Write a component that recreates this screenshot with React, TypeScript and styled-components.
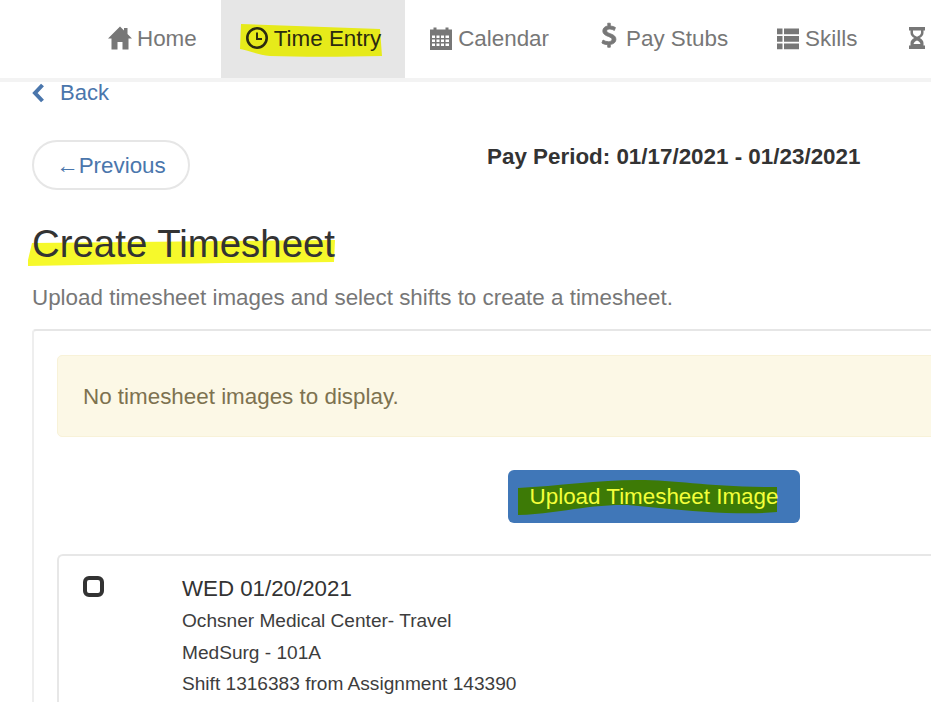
import { FC, ReactNode } from 'react';
import styled, { createGlobalStyle } from 'styled-components';

const GlobalStyle = createGlobalStyle`
  html, body { margin: 0; padding: 0; background: #fff; }
  body { font-family: "Liberation Sans", Arial, sans-serif; }
`;

const Page = styled.div`
  width: 931px;
  height: 702px;
  overflow: hidden;
  background: #fff;
`;

const Nav = styled.nav`
  display: flex;
  height: 78px;
  padding-left: 84px;
  border-bottom: 4px solid #f3f3f3;
  overflow: hidden;
`;

const NavItem = styled.div<{ $active?: boolean }>`
  position: relative;
  flex: none;
  display: flex;
  align-items: center;
  gap: 5px;
  padding: 0 24px;
  font-size: 22.4px;
  color: ${p => (p.$active ? '#2b2b10' : '#777')};
  background: ${p => (p.$active ? '#e6e6e6' : 'transparent')};
`;

const NavIcon = styled.svg`
  flex: none;
  width: 24px;
  height: 24px;
  margin-top: -2px;
  fill: currentColor;
  overflow: visible;
  position: relative;
`;

const NavLabel = styled.span`
  position: relative;
`;

const Marker = styled.svg`
  position: absolute;
  overflow: visible;
  pointer-events: none;
`;

const NavMarker = styled(Marker)`
  left: 19px;
  top: 24px;
  width: 142px;
  height: 34px;
`;

const Main = styled.main`
  padding-left: 32px;
`;

const BackLink = styled.a`
  display: flex;
  align-items: center;
  gap: 15px;
  height: 22px;
  font-size: 22px;
  color: #4a76ac;
`;

const TopRow = styled.div`
  display: flex;
  align-items: flex-start;
  margin-top: 36px;
`;

const PrevButton = styled.button`
  width: 158px;
  height: 50px;
  padding: 2px 0 0;
  border: 2px solid #e6e6e6;
  border-radius: 25px;
  background: #fff;
  font: 22.4px "Liberation Sans", Arial, sans-serif;
  color: #4a76ac;
`;

const PayPeriod = styled.div`
  margin: 4px 0 0 297px;
  font-size: 22.4px;
  font-weight: 700;
  line-height: 26px;
  color: #333;
  white-space: nowrap;
`;

const Heading = styled.h1`
  position: relative;
  width: max-content;
  margin: 31px 0 0;
  font-size: 38.4px;
  font-weight: 400;
  line-height: 46px;
  color: #333;
`;

const HeadingText = styled.span`
  position: relative;
`;

const HeadingMarker = styled(Marker)`
  left: -4px;
  top: 19px;
  width: 308px;
  height: 26px;
`;

const Subtitle = styled.p`
  margin: 18px 0 0;
  font-size: 22.4px;
  line-height: 26px;
  color: #777;
  white-space: nowrap;
`;

const Panel = styled.section`
  width: 1000px;
  margin-top: 18px;
  padding: 24px 0 0 23px;
  border-top: 2px solid #e6e6e6;
  border-left: 2px solid #eeeeee;
  border-radius: 4px 0 0 0;
`;

const Notice = styled.div`
  display: flex;
  align-items: center;
  box-sizing: border-box;
  height: 82px;
  padding: 2px 0 0 25px;
  border: 1px solid #f8f2d8;
  border-radius: 5px;
  background: #fcf8e6;
  font-size: 22.4px;
  color: #7d7250;
`;

const UploadRow = styled.div`
  display: flex;
  margin-top: 33px;
  padding-left: 451px;
`;

const UploadButton = styled.button`
  position: relative;
  width: 292px;
  height: 53px;
  padding: 0;
  border: 0;
  border-radius: 6px;
  background: #4077b8;
  font: 22.4px "Liberation Sans", Arial, sans-serif;
  color: #f4ff3a;
`;

const UploadText = styled.span`
  position: relative;
`;

const UploadMarker = styled(Marker)`
  left: 10px;
  top: 10px;
  width: 259px;
  height: 36px;
`;

const ShiftCard = styled.article`
  display: flex;
  min-height: 200px;
  margin-top: 31px;
  padding: 20px 0 0 24px;
  border: 2px solid #e7e7e7;
  border-right: 0;
  border-bottom: 0;
  border-radius: 6px 0 0 0;
`;

const CheckBox = styled.span`
  flex: none;
  box-sizing: border-box;
  width: 21px;
  height: 21px;
  border: 4px solid #333;
  border-radius: 6px;
`;

const ShiftInfo = styled.div`
  margin-left: 78px;
`;

const ShiftDate = styled.div`
  font-size: 22.3px;
  line-height: 26px;
  color: #333;
`;

const ShiftLine = styled.div`
  margin-top: 7px;
  font-size: 19.1px;
  line-height: 24.5px;
  color: #3d3d3d;
  white-space: nowrap;
`;

const HomeIcon = () => (
  <NavIcon viewBox="0 0 24 24">
    <path d="M12 .5 L16 4.500 V2 H19.500 V8 L24 12.500 H20.500 V23.500 H14.500 V16 H9.500 V23.500 H3.500 V12.500 H0 Z" />
  </NavIcon>
);

const ClockIcon = () => (
  <NavIcon viewBox="0 0 24 24">
    <path fillRule="evenodd" d="M12 1a11 11 0 1 0 0 22a11 11 0 1 0 0-22Zm0 2.600a8.400 8.400 0 1 1 0 16.800a8.400 8.400 0 1 1 0-16.800Z" />
    <path d="M11 6.500h2v5.500h4v2h-6Z" />
  </NavIcon>
);

const CalendarIcon = () => (
  <NavIcon viewBox="0 0 24 24">
    <path
      fillRule="evenodd"
      d="M1 3.500h3.500V1.500h3V3.500h9V1.500h3V3.500H23V24H1ZM3 9.500v2.500h3V9.500Zm4.500 0v2.500h3V9.500Zm4.500 0v2.500h3V9.500Zm4.500 0v2.500h3.500V9.500ZM3 13.500v2.500h3v-2.500Zm4.500 0v2.500h3v-2.500Zm4.500 0v2.500h3v-2.500Zm4.500 0v2.500h3.500v-2.500ZM3 17.500v2.500h3v-2.500Zm4.500 0v2.500h3v-2.500Zm4.500 0v2.500h3v-2.500Zm4.500 0v2.500h3.500v-2.500Z"
    />
  </NavIcon>
);

const DollarIcon = () => (
  <NavIcon viewBox="-1 3 26 26">
    <path
      stroke="currentColor"
      strokeWidth="0.9"
      d="M10.600 0h2.800v3c2.400.2 4.300.9 5.600 1.700l-1.200 3.100c-1.400-.8-3.100-1.500-5-1.500-2.200 0-3.300.9-3.300 2.100 0 1.400 1.500 2 4.100 3 3.800 1.400 5.900 3 5.900 6 0 3-2.300 5.100-6.100 5.600V26h-2.800v-2.800c-2.500-.1-4.800-.8-6.300-1.800l1.200-3.200c1.500.9 3.800 1.800 5.900 1.800 2.300 0 3.800-1 3.800-2.500 0-1.400-1.200-2.200-3.900-3.200-3.700-1.300-6-2.900-6-5.900 0-2.900 2.100-5 5.500-5.500Z"
    />
  </NavIcon>
);

const ListIcon = () => (
  <NavIcon viewBox="0 0 24 24">
    <path d="M1 2.500h5.500v5.700H1ZM8 2.500h15v5.700H8ZM1 10h5.500v5.700H1ZM8 10h15v5.700H8ZM1 17.500h5.500v5.700H1ZM8 17.500h15v5.700H8Z" />
  </NavIcon>
);

const HourglassIcon = () => (
  <NavIcon viewBox="0 0 24 24">
    <path
      fillRule="evenodd"
      d="M4 1h16v3.500h-1.500v2.500c0 2.500-2 4-3.800 5 1.800 1 3.800 2.500 3.800 5v2.500H20V23H4v-3.500h1.500V17c0-2.500 2-4 3.800-5-1.800-1-3.800-2.500-3.800-5V4.500H4Zm4 3.500V7c0 1.500 2 3 4 3.700 2-.7 4-2.200 4-3.700V4.500Zm4 10c-1.500.7-3 1.800-3.500 3.500h7c-.5-1.700-2-2.800-3.500-3.500Z"
    />
  </NavIcon>
);

const BackChevron = () => (
  <svg width="13" height="20" viewBox="0 0 13 20">
    <path d="M10.500 2 L3 10 L10.500 18" fill="none" stroke="#4a76ac" strokeWidth="4" />
  </svg>
);

interface TabProps {
  icon: ReactNode;
  label?: string;
  active?: boolean;
}

const Tab: FC<TabProps> = ({ icon, label, active }) => (
  <NavItem $active={active}>
    {active && (
      <NavMarker viewBox="0 0 142 34" preserveAspectRatio="none">
        <path d="M1 0 L140 5 L142 32 C100 33 60 33 30 32 C18 31 8 26 0 25 Z" fill="#e6ea1a" />
      </NavMarker>
    )}
    {icon}
    {label && <NavLabel>{label}</NavLabel>}
  </NavItem>
);

const App: FC = () => (
  <Page>
    <GlobalStyle />
    <Nav>
      <Tab icon={<HomeIcon />} label="Home" />
      <Tab active icon={<ClockIcon />} label="Time Entry" />
      <Tab icon={<CalendarIcon />} label="Calendar" />
      <Tab icon={<DollarIcon />} label="Pay Stubs" />
      <Tab icon={<ListIcon />} label="Skills" />
      <Tab icon={<HourglassIcon />} />
    </Nav>
    <Main>
      <BackLink>
        <BackChevron />
        Back
      </BackLink>
      <TopRow>
        <PrevButton>←Previous</PrevButton>
        <PayPeriod>Pay Period: 01/17/2021 - 01/23/2021</PayPeriod>
      </TopRow>
      <Heading>
        <HeadingMarker viewBox="0 0 308 26" preserveAspectRatio="none">
          <path d="M4 3 L307 0 L306 22 C200 23 90 24 0 26 L0 20 Z" fill="#f6f92b" />
        </HeadingMarker>
        <HeadingText>Create Timesheet</HeadingText>
      </Heading>
      <Subtitle>Upload timesheet images and select shifts to create a timesheet.</Subtitle>
      <Panel>
        <Notice>No timesheet images to display.</Notice>
        <UploadRow>
          <UploadButton>
            <UploadMarker viewBox="0 0 259 36" preserveAspectRatio="none">
              <path d="M0 8 C40 6 80 0 120 0 C160 0 190 7 259 7 L259 32 C220 36 160 30 110 25 C70 24 40 34 0 35 Z" fill="#3d7a06" />
            </UploadMarker>
            <UploadText>Upload Timesheet Image</UploadText>
          </UploadButton>
        </UploadRow>
        <ShiftCard>
          <CheckBox />
          <ShiftInfo>
            <ShiftDate>WED 01/20/2021</ShiftDate>
            <ShiftLine>Ochsner Medical Center- Travel</ShiftLine>
            <ShiftLine>MedSurg - 101A</ShiftLine>
            <ShiftLine>Shift 1316383 from Assignment 143390</ShiftLine>
          </ShiftInfo>
        </ShiftCard>
      </Panel>
    </Main>
  </Page>
);

export default App;
